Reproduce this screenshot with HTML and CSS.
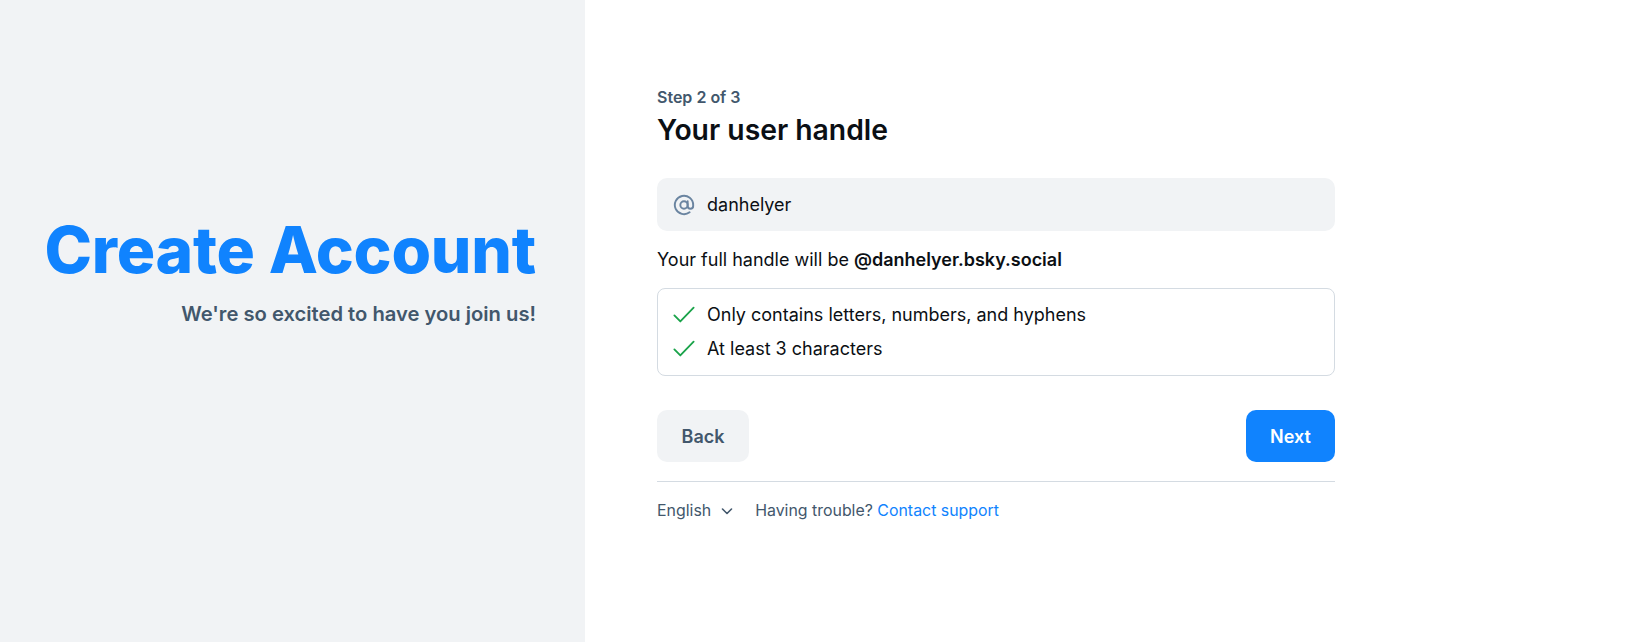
FILE: index.html
```html
<!DOCTYPE html>
<html lang="en">
<head>
<meta charset="utf-8">
<title>Create Account</title>
<link rel="stylesheet" href="styles.css">
</head>
<body>
<div class="page">
  <aside class="intro">
    <h1 class="intro-title">Create Account</h1>
    <p class="intro-sub">We're so excited to have you join us!</p>
  </aside>
  <main class="panel">
    <div class="form">
      <div class="step">Step 2 of 3</div>
      <h2 class="heading">Your user handle</h2>
      <label class="field">
        <svg class="at-icon" width="22" height="22" viewBox="0 0 24 24" fill="none" stroke="currentColor" stroke-width="2.1" stroke-linecap="round" stroke-linejoin="round"><circle cx="12" cy="12" r="4"/><path d="M16 8v5a3 3 0 0 0 6 0v-1a10 10 0 1 0-3.92 7.94"/></svg>
        <span class="field-value">danhelyer</span>
      </label>
      <p class="full-handle">Your full handle will be <strong>@danhelyer.bsky.social</strong></p>
      <ul class="checks">
        <li class="check-item"><svg class="check" width="22" height="22" viewBox="0 0 24 24" fill="none" stroke="currentColor" stroke-width="2" stroke-linecap="round" stroke-linejoin="round"><path d="M1.5 12.5l6.5 6.5L22.5 4"/></svg>Only contains letters, numbers, and hyphens</li>
        <li class="check-item"><svg class="check" width="22" height="22" viewBox="0 0 24 24" fill="none" stroke="currentColor" stroke-width="2" stroke-linecap="round" stroke-linejoin="round"><path d="M1.5 12.5l6.5 6.5L22.5 4"/></svg>At least 3 characters</li>
      </ul>
      <div class="actions">
        <button class="btn btn-back">Back</button>
        <button class="btn btn-next">Next</button>
      </div>
      <div class="footer">
        <span class="lang">English <svg width="12" height="12" viewBox="0 0 12 12" fill="none" stroke="currentColor" stroke-width="1.6" stroke-linecap="round" stroke-linejoin="round"><path d="M1.5 4l4.5 4.5 4.5-4.5"/></svg></span>
        <span class="trouble">Having trouble? <a class="link" href="#">Contact support</a></span>
      </div>
    </div>
  </main>
</div>
</body>
</html>
```
FILE: styles.css
```css
* { box-sizing: border-box; }
html, body { margin: 0; padding: 0; }
body {
  font-family: Inter, "Noto Sans", "Liberation Sans", sans-serif;
  color: #0b0f14;
  background: #ffffff;
}
.page {
  display: flex;
  min-height: 642px;
}
.intro {
  flex: 0 0 585px;
  background: #f1f3f5;
  display: flex;
  flex-direction: column;
  align-items: flex-end;
  padding: 218px 49px 0 0;
}
.intro-title {
  margin: 0;
  font-size: 64px;
  line-height: 64px;
  font-weight: 800;
  color: #1083fe;
  letter-spacing: -0.2px;
}
.intro-sub {
  margin: 18px 0 0;
  font-size: 20.2px;
  line-height: 28px;
  font-weight: 600;
  color: #42576c;
}
.panel {
  flex: 1;
  padding: 87px 0 0 72px;
}
.form {
  width: 678px;
}
.step {
  font-size: 16px;
  line-height: 20px;
  font-weight: 600;
  color: #42576c;
}
.heading {
  margin: 6px 0 0;
  font-size: 28.3px;
  line-height: 34px;
  font-weight: 600;
  color: #0b0f14;
}
.field {
  margin-top: 31px;
  height: 53px;
  background: #f1f3f5;
  border-radius: 10px;
  display: flex;
  align-items: center;
  padding: 0 16px;
  gap: 12px;
}
.at-icon { color: #6a84a0; flex: none; }
.field-value {
  font-size: 18px;
  color: #0b0f14;
}
.full-handle {
  margin: 17px 0 0;
  font-size: 18px;
  line-height: 24px;
}
.full-handle strong { font-weight: 600; }
.checks {
  list-style: none;
  margin: 16px 0 0;
  padding: 14px 16px 14px 15px;
  border: 1px solid #d4dbe2;
  border-radius: 8px;
  display: flex;
  flex-direction: column;
  gap: 10px;
}
.check-item {
  display: flex;
  align-items: center;
  gap: 12px;
  font-size: 18px;
  line-height: 24px;
}
.check { color: #1aa34a; flex: none; }
.actions {
  margin-top: 34px;
  display: flex;
  justify-content: space-between;
  padding-bottom: 19px;
  border-bottom: 1px solid #d4dbe2;
}
.btn {
  font-family: inherit;
  font-size: 18px;
  font-weight: 600;
  border: none;
  border-radius: 10px;
  height: 52px;
  padding: 0;
  cursor: pointer;
}
.btn-back { background: #f1f3f5; color: #42576c; width: 92px; }
.btn-next { background: #1083fe; color: #ffffff; width: 89px; }
.footer {
  display: flex;
  align-items: center;
  gap: 22px;
  padding-top: 19px;
  font-size: 15.9px;
  line-height: 20px;
  color: #42576c;
}
.lang { display: inline-flex; align-items: center; gap: 10px; }
.link { color: #1083fe; text-decoration: none; }
```
